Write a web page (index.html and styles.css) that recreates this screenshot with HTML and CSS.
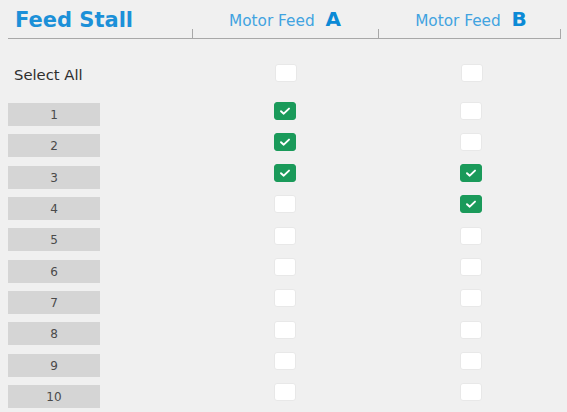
FILE: index.html
```html
<!DOCTYPE html>
<html>
<head>
<meta charset="utf-8">
<link rel="stylesheet" href="styles.css">
</head>
<body>
<div class="panel">
  <div class="head">
    <div class="titles">
      <div class="title">Feed Stall</div>
      <div class="colhead">Motor Feed <b>A</b></div>
      <div class="colhead">Motor Feed <b>B</b></div>
    </div>
    <div class="ruler">
      <div class="r0"></div>
      <div class="r1"></div>
      <div class="r2"></div>
    </div>
  </div>

  <div class="row selall">
    <div class="lbl">Select All</div>
    <div class="cell"><span class="cb"></span></div>
    <div class="cell"><span class="cb"></span></div>
  </div>

  <div class="rows">
    <div class="row"><div class="num">1</div><div class="cell"><span class="cb on"><svg viewBox="0 0 22 18"><path d="M6.5 9.2 L9.6 12 L15.5 6.3"/></svg></span></div><div class="cell"><span class="cb"></span></div></div>
    <div class="row"><div class="num">2</div><div class="cell"><span class="cb on"><svg viewBox="0 0 22 18"><path d="M6.5 9.2 L9.6 12 L15.5 6.3"/></svg></span></div><div class="cell"><span class="cb"></span></div></div>
    <div class="row"><div class="num">3</div><div class="cell"><span class="cb on"><svg viewBox="0 0 22 18"><path d="M6.5 9.2 L9.6 12 L15.5 6.3"/></svg></span></div><div class="cell"><span class="cb on"><svg viewBox="0 0 22 18"><path d="M6.5 9.2 L9.6 12 L15.5 6.3"/></svg></span></div></div>
    <div class="row"><div class="num">4</div><div class="cell"><span class="cb"></span></div><div class="cell"><span class="cb on"><svg viewBox="0 0 22 18"><path d="M6.5 9.2 L9.6 12 L15.5 6.3"/></svg></span></div></div>
    <div class="row"><div class="num">5</div><div class="cell"><span class="cb"></span></div><div class="cell"><span class="cb"></span></div></div>
    <div class="row"><div class="num">6</div><div class="cell"><span class="cb"></span></div><div class="cell"><span class="cb"></span></div></div>
    <div class="row"><div class="num">7</div><div class="cell"><span class="cb"></span></div><div class="cell"><span class="cb"></span></div></div>
    <div class="row"><div class="num">8</div><div class="cell"><span class="cb"></span></div><div class="cell"><span class="cb"></span></div></div>
    <div class="row"><div class="num">9</div><div class="cell"><span class="cb"></span></div><div class="cell"><span class="cb"></span></div></div>
    <div class="row"><div class="num">10</div><div class="cell"><span class="cb"></span></div><div class="cell"><span class="cb"></span></div></div>
  </div>
</div>
</body>
</html>
```

FILE: styles.css
```css
html, body {
  margin: 0;
  padding: 0;
  background: #f0f0f0;
  font-family: "DejaVu Sans", Verdana, sans-serif;
}

.panel {
  width: 567px;
  height: 412px;
  padding: 0 3px 0 8px;
  box-sizing: border-box;
  overflow: hidden;
}

.titles,
.row {
  display: grid;
  grid-template-columns: 184px 186px 186px;
}

.ruler {
  display: grid;
  grid-template-columns: 184px 186px 183px;
}

.titles {
  height: 29px;
  align-items: end;
}

.title {
  font-size: 21px;
  font-weight: bold;
  color: #1c90d8;
  padding-left: 7px;
  line-height: 24px;
  margin-bottom: -3px;
}

.colhead {
  text-align: center;
  font-size: 15.3px;
  color: #41a3e0;
  line-height: 22px;
  margin-bottom: -3px;
}

.colhead b {
  font-size: 20px;
  color: #0b8ad6;
  margin-left: 6px;
}

.ruler {
  height: 9px;
  border-bottom: 1px solid #a8a8a8;
  width: 553px;
}

.r1 {
  border-left: 1px solid #a8a8a8;
}

.r2 {
  border-left: 1px solid #a8a8a8;
  border-right: 1px solid #a8a8a8;
}

.row {
  align-items: start;
}

.selall {
  margin-top: 23px;
  height: 18px;
  align-items: center;
}

.lbl {
  padding-left: 6px;
  font-size: 14.8px;
  color: #2e2e2e;
  line-height: 18px;
  padding-top: 4px;
}

.rows {
  margin-top: 23px;
  display: flex;
  flex-direction: column;
  gap: 8.33px;
}

.rows .row {
  height: 23px;
}

.num {
  width: 92px;
  height: 23px;
  background: #d5d5d5;
  text-align: center;
  font-size: 12px;
  line-height: 24px;
  color: #4a4a4a;
}

.cell {
  display: flex;
  justify-content: center;
}

.rows .cell {
  margin-top: -1.5px;
}

.selall .cell .cb {
  margin-left: 1px;
}

.cb {
  width: 22px;
  height: 18px;
  box-sizing: border-box;
  border-radius: 3px;
  background: #ffffff;
  border: 1px solid #e8e8e8;
  display: block;
}

.cb.on {
  background: #1a9a5a;
  border-color: #1a9a5a;
}

.cb svg {
  display: block;
  width: 20px;
  height: 16px;
  fill: none;
  stroke: #ffffff;
  stroke-width: 2.2;
  stroke-linecap: round;
  stroke-linejoin: round;
}
```
